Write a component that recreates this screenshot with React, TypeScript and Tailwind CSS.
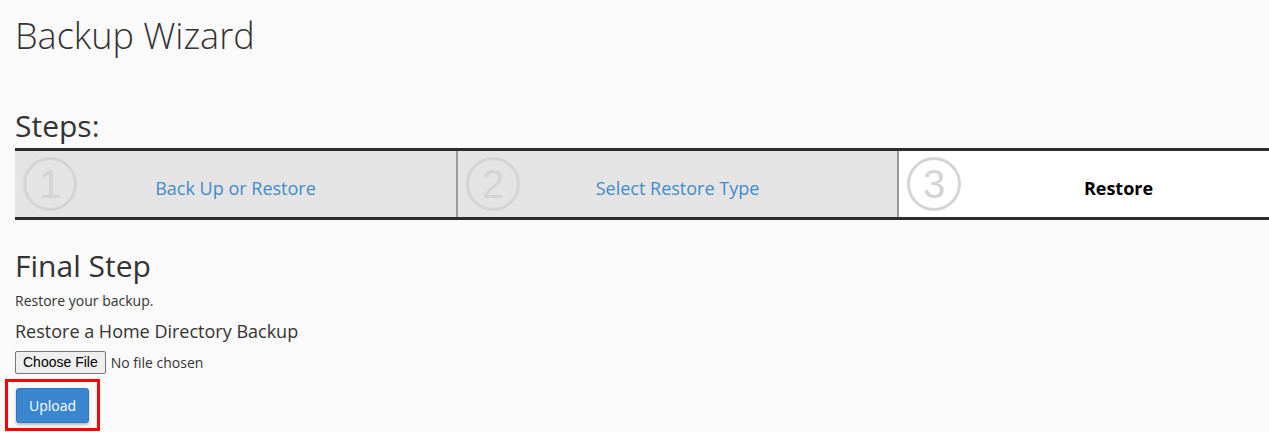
const steps = [
  { n: "1", label: "Back Up or Restore", active: false },
  { n: "2", label: "Select Restore Type", active: false },
  { n: "3", label: "Restore", active: true },
];

const App = () => {
  return (
    <div
      className="min-h-[432px] overflow-hidden bg-[#fafafa] text-[#333] pl-[15px]"
      style={{ fontFamily: '"Open Sans", "Liberation Sans", sans-serif' }}
    >
      <h1 className="pt-[14px] text-[36px] font-light leading-[44px]">Backup Wizard</h1>
      <h2 className="mt-[50px] text-[30px] leading-[36px]">Steps:</h2>
      <div className="mt-[4px] flex w-[1323px] border-y-[3px] border-[#2d2d2d] h-[72px]">
        {steps.map((s, i) => (
          <div
            key={s.n}
            className={
              "relative w-[441px] shrink-0 flex items-center justify-center " +
              (s.active ? "bg-white" : "bg-[#e4e4e4]") +
              (i > 0 ? " border-l-2 border-[#9a9a9a]" : "")
            }
          >
            <div className="absolute left-[8px] top-[6px] w-[54px] h-[54px] rounded-full border-[3px] border-[#d4d4d4] flex items-center justify-center">
              <span
                className="text-[40px] leading-none text-[#d4d4d4]"
                style={{ fontFamily: '"Liberation Sans", sans-serif' }}
              >
                {s.n}
              </span>
            </div>
            <span
              className={
                "mt-[8px] text-[18px] " +
                (s.active ? "font-bold text-black" : "text-[#428bca]")
              }
            >
              {s.label}
            </span>
          </div>
        ))}
      </div>
      <h2 className="mt-[28px] text-[30px] leading-[36px]">Final Step</h2>
      <p className="mt-[7px] text-[14px] leading-[20px]">Restore your backup.</p>
      <h3 className="mt-[8px] text-[18px] leading-[24px]">Restore a Home Directory Backup</h3>
      <div className="mt-[8px] flex items-center gap-[5px] text-[14px]">
        <span
          className="px-[7px] h-[23px] flex items-center border border-[#767676] rounded-[2px] bg-[#efefef] text-black text-[14px]"
          style={{ fontFamily: '"Liberation Sans", sans-serif' }}
        >
          Choose File
        </span>
        <span className="text-[#333]">No file chosen</span>
      </div>
      <div className="mt-[5px] -ml-[10px] w-[95px] h-[52px] border-[3px] border-[#ff0000] flex items-center justify-center">
        <button className="w-[73px] h-[35px] rounded-[3px] bg-[#3a87d0] border border-[#2f77bb] text-white text-[14px] shadow-[0_2px_3px_rgba(0,0,0,0.25)]">
          Upload
        </button>
      </div>
    </div>
  );
};

export default App;
